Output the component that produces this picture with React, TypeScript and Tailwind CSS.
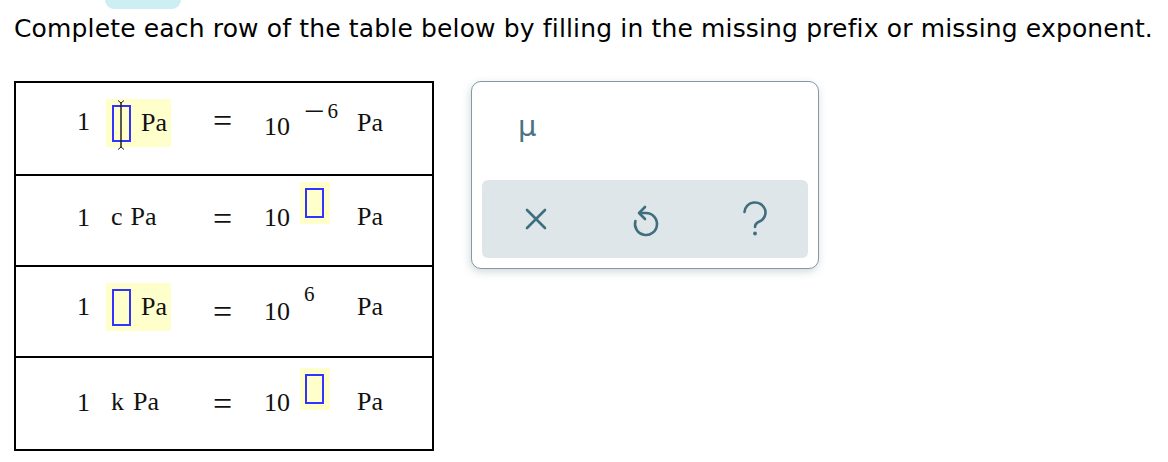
import React from 'react';

const serif = "font-['Liberation_Serif','Times_New_Roman',serif]";

const BlueBox: React.FC<{ h: string; caret?: boolean }> = ({ h, caret }) => (
  <div className={`relative w-[19px] ${h} border-2 border-[#3333ff]`}>
    {caret && (
      <svg className="absolute left-[1px] -top-[7px]" width="12" height="50" viewBox="0 0 12 50">
        <path d="M6 2 V48" stroke="#222" strokeWidth="1.5" />
        <path d="M3 0.5 L6 3 L9 0.5 M3 49.5 L6 47 L9 49.5" stroke="#222" strokeWidth="1" fill="none" />
      </svg>
    )}
  </div>
);

// yellow prefix slot: blue box followed by "Pa"
const PrefixSlot: React.FC<{ caret?: boolean }> = ({ caret }) => (
  <div className="ml-[16px] mt-[16px] flex h-[48px] w-[65px] items-start bg-[#ffffcc] pl-[6px] pt-[6px]">
    <BlueBox h="h-[37px]" caret={caret} />
    <span className="ml-[10px] mt-[5px] leading-none">Pa</span>
  </div>
);

const ExpSlot: React.FC<{ mt: string }> = ({ mt }) => (
  <div className={`ml-[10px] ${mt} flex h-[42px] w-[30px] items-start bg-[#ffffcc] pl-[5px] pt-[6px]`}>
    <BlueBox h="h-[30px]" />
  </div>
);

const Cell: React.FC<{ mt: string; className?: string; children: React.ReactNode }> = ({ mt, className, children }) => (
  <span className={`${mt} leading-none ${className ?? ''}`}>{children}</span>
);

const App: React.FC = () => {
  return (
    <div className="h-[462px] w-[1168px] overflow-hidden bg-white">
      <div className="ml-[105px] h-[9px] w-[76px] rounded-b-[10px] bg-[#cdeef3]" />
      <h1 className="ml-[14px] mt-[5px] whitespace-nowrap font-['DejaVu_Sans','Verdana',sans-serif] text-[25px] leading-[29px] tracking-[0.15px] text-black">
        Complete each row of the table below by filling in the missing prefix or missing exponent.
      </h1>

      <div className="ml-[14px] mt-[38px] flex items-start gap-[37px]">
        {/* conversion table */}
        <div className={`w-[420px] border-2 border-black text-[26px] text-[#111] ${serif}`}>
          {/* row 1 */}
          <div className="flex h-[91px] items-start">
            <div className="ml-[61px] flex w-[136px] items-start">
              <Cell mt="mt-[26px]" className="w-[13px]">1</Cell>
              <PrefixSlot caret />
            </div>
            <Cell mt="mt-[21px]" className="w-[51px] text-[34px]">=</Cell>
            <Cell mt="mt-[31px]" className="w-[26px]">10</Cell>
            <div className="flex w-[67px] items-start pl-[13px] text-[21px]">
              <Cell mt="mt-[18px]" className="inline-block origin-left scale-x-[1.3] font-['DejaVu_Serif',serif]">−</Cell>
              <Cell mt="mt-[18px]" className="ml-[7px]">6</Cell>
            </div>
            <Cell mt="mt-[27px]">Pa</Cell>
          </div>

          {/* row 2 */}
          <div className="flex h-[91px] items-start border-t-2 border-black">
            <div className="ml-[61px] flex w-[136px] items-start">
              <Cell mt="mt-[29px]" className="w-[13px]">1</Cell>
              <Cell mt="mt-[28px]" className="ml-[21px]">c</Cell>
              <Cell mt="mt-[28px]" className="ml-[8px]">Pa</Cell>
            </div>
            <Cell mt="mt-[26px]" className="w-[51px] text-[34px]">=</Cell>
            <Cell mt="mt-[29px]" className="w-[26px]">10</Cell>
            <div className="flex w-[67px] items-start">
              <ExpSlot mt="mt-[6px]" />
            </div>
            <Cell mt="mt-[28px]">Pa</Cell>
          </div>

          {/* row 3 */}
          <div className="flex h-[91px] items-start border-t-2 border-black">
            <div className="ml-[61px] flex w-[136px] items-start">
              <Cell mt="mt-[27px]" className="w-[13px]">1</Cell>
              <PrefixSlot />
            </div>
            <Cell mt="mt-[28px]" className="w-[51px] text-[34px]">=</Cell>
            <Cell mt="mt-[32px]" className="w-[26px]">10</Cell>
            <div className="flex w-[67px] items-start pl-[14px] text-[21px]">
              <Cell mt="mt-[17px]">6</Cell>
            </div>
            <Cell mt="mt-[27px]">Pa</Cell>
          </div>

          {/* row 4 */}
          <div className="flex h-[93px] items-start border-t-2 border-black">
            <div className="ml-[61px] flex w-[136px] items-start">
              <Cell mt="mt-[32px]" className="w-[13px]">1</Cell>
              <Cell mt="mt-[31px]" className="ml-[21px]">k</Cell>
              <Cell mt="mt-[31px]" className="ml-[9px]">Pa</Cell>
            </div>
            <Cell mt="mt-[29px]" className="w-[51px] text-[34px]">=</Cell>
            <Cell mt="mt-[32px]" className="w-[26px]">10</Cell>
            <div className="flex w-[67px] items-start">
              <ExpSlot mt="mt-[10px]" />
            </div>
            <Cell mt="mt-[31px]">Pa</Cell>
          </div>
        </div>

        {/* prefix palette */}
        <div className="flex h-[188px] w-[348px] flex-col rounded-[10px] border border-[#8499a2] bg-white p-[10px] shadow-[-1px_3px_8px_rgba(60,80,90,0.22)]">
          <div className="h-[88px]">
            <span className="ml-[36px] mt-[20px] block font-['DejaVu_Sans',sans-serif] text-[29px] leading-none text-[#4a7383]">μ</span>
          </div>
          <div className="flex h-[78px] items-center rounded-[6px] bg-[#dfe6e9]">
            <svg className="ml-[43px]" width="22" height="22" viewBox="0 0 22 22">
              <path d="M2 2 L20 20 M20 2 L2 20" stroke="#3f6e7e" strokeWidth="2.6" strokeLinecap="round" />
            </svg>
            <svg className="ml-[78px]" width="40" height="42" viewBox="0 0 40 42" fill="none">
              <path d="M15 15 H21 A11 11 0 1 1 10.4 23" stroke="#3f6e7e" strokeWidth="2.6" strokeLinecap="round" />
              <path d="M20 9 L14 15 L20 21" stroke="#3f6e7e" strokeWidth="2.6" strokeLinecap="round" strokeLinejoin="round" />
            </svg>
            <svg className="ml-[75px]" width="30" height="42" viewBox="0 0 30 42" fill="none">
              <path d="M4.5 14 A10.5 10 0 1 1 19.5 23.5 C16 25 15 26.5 15 29" stroke="#3f6e7e" strokeWidth="2.6" strokeLinecap="round" />
              <circle cx="15" cy="35.5" r="1.9" fill="#3f6e7e" />
            </svg>
          </div>
        </div>
      </div>
    </div>
  );
};

export default App;
